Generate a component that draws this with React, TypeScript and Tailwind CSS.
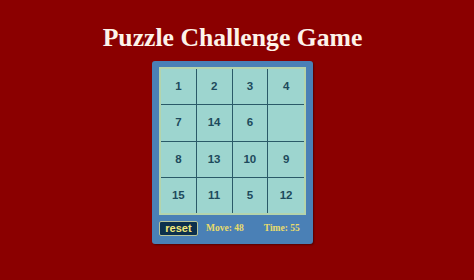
const tiles = [1, 2, 3, 4, 7, 14, 6, 0, 8, 13, 10, 9, 15, 11, 5, 12]

export default function App() {
  return (
    <div className="w-[474px] h-[280px] bg-[#8b0000] overflow-hidden">
      <div className="w-[465px] flex flex-col items-center">
        <h1 className="mt-[20px] text-[25.7px] leading-[36px] font-bold text-[#fdf3ea] font-['Liberation_Serif',serif]">
          Puzzle Challenge Game
        </h1>
        <div className="mt-[5px] w-[161px] bg-[#4a80b6] rounded-[3px] pt-[6px] px-[7px] pb-[2px] shadow-[1px_1px_2px_rgba(0,0,0,0.4)]">
          <div className="grid grid-cols-4 w-[147px] h-[148px] border-2 border-[#b4d4ac] bg-[#9dd5cf]">
            {tiles.map((n, i) => (
              <div
                key={i}
                className={`flex items-center justify-center text-[11.5px] font-bold text-[#1d4a5c] font-['Liberation_Sans',sans-serif] border-[#2a5a68] ${
                  i % 4 !== 3 ? 'border-r' : ''
                } ${i < 12 ? 'border-b' : ''}`}
              >
                {n !== 0 ? n : ''}
              </div>
            ))}
          </div>
          <div className="flex items-center h-[27px]">
            <button className="w-[39px] h-[15px] bg-[#0c2f4c] border border-[#b8c498] rounded-[2px] text-[11px] leading-none font-bold text-[#f2e87a] font-['Liberation_Sans',sans-serif]">
              reset
            </button>
            <span className="ml-[8px] text-[9.5px] font-bold text-[#e9dc6a] font-['Liberation_Serif',serif]">Move: 48</span>
            <span className="ml-[20px] text-[9.5px] font-bold text-[#e9dc6a] font-['Liberation_Serif',serif]">Time: 55</span>
          </div>
        </div>
      </div>
    </div>
  )
}
